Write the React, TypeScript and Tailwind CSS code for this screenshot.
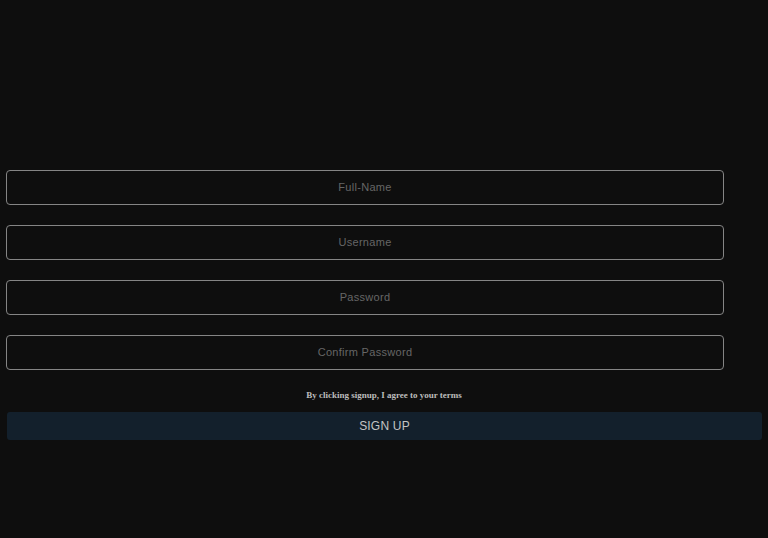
export default function App() {
  const fields = [
    { placeholder: 'Full-Name', type: 'text' },
    { placeholder: 'Username', type: 'text' },
    { placeholder: 'Password', type: 'password' },
    { placeholder: 'Confirm Password', type: 'password' },
  ];

  return (
    <div className="min-h-[538px] w-full bg-[#0e0e0e] pt-[170px] px-[6px]" style={{ fontFamily: '"Liberation Sans", Arial, sans-serif' }}>
      <form className="flex flex-col" onSubmit={(e) => e.preventDefault()}>
        <div className="flex flex-col gap-[20px]">
          {fields.map((f) => (
            <input
              key={f.placeholder}
              type={f.type}
              placeholder={f.placeholder}
              className="h-[35px] w-[718px] rounded-[4px] border border-[#858585] bg-transparent pb-[2px] text-center text-[11px] tracking-[0.3px] text-[#ccc] placeholder:text-[#666] outline-none"
            />
          ))}
        </div>

        <p
          className="mt-[19px] text-center text-[9px] font-bold text-[#bdbdbd]"
          style={{ fontFamily: '"Liberation Serif", "Times New Roman", serif' }}
        >
          By clicking signup, I agree to your terms
        </p>

        <button
          type="submit"
          className="mt-[9px] ml-[1px] h-[28px] w-[755px] rounded-[3px] bg-[#13202c] text-[12px] font-medium tracking-[0.2px] text-[#c4c4c4]"
        >
          SIGN UP
        </button>
      </form>
    </div>
  );
}
